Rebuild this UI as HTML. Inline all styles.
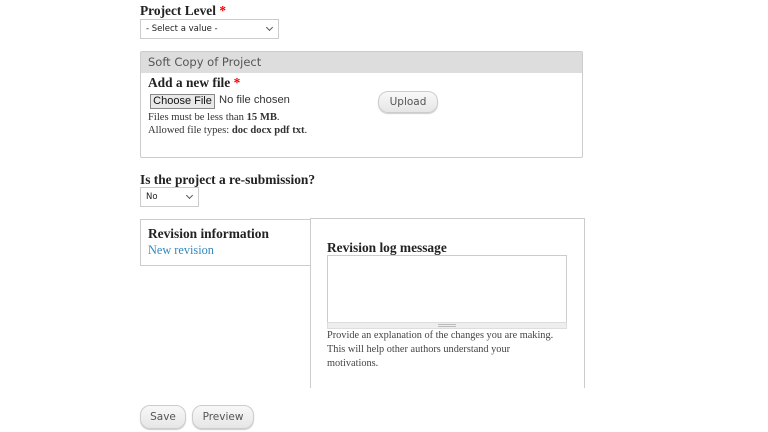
<!DOCTYPE html>
<html><head><style>
body{margin:0;width:768px;height:432px;background:#fff;position:relative;overflow:hidden;font-family:"Liberation Serif",serif;color:#333}
.a{position:absolute;white-space:nowrap}
.b{font-weight:bold;font-size:13.4px;color:#222}
.s{font-family:"Liberation Sans",sans-serif}
.req{color:#e00}
.sel{position:absolute;border:1px solid #ccc;background:#fff;font-family:"DejaVu Sans",sans-serif;font-size:8.5px;color:#222;box-sizing:border-box}
.chev{position:absolute;right:5px;top:4px;width:4px;height:4px;border-right:1px solid #555;border-bottom:1px solid #555;transform:rotate(45deg)}
.btn{position:absolute;border:1px solid #ccc;border-radius:10px;background:linear-gradient(#f8f8f8,#e6e6e6);font-family:"DejaVu Sans",sans-serif;font-size:10.5px;color:#555;text-align:center;box-sizing:border-box;box-shadow:0 1px 1px #ccc}
</style></head><body>
<div class="a b" style="left:140px;top:3px">Project Level <span class="req">*</span></div>
<div class="sel" style="left:140px;top:19px;width:139px;height:20px;padding:4px 0 0 5px">- Select a value -<div class="chev" style="top:5px;right:6px"></div></div>

<div class="a" style="left:140px;top:51px;width:443px;height:107px;border:1px solid #ccc;border-radius:2px;box-sizing:border-box"></div>
<div class="a" style="left:141px;top:52px;width:441px;height:21px;background:#ddd;font-family:'DejaVu Sans',sans-serif;font-size:11.5px;color:#555;padding:3px 0 0 7px;box-sizing:border-box">Soft Copy of Project</div>
<div class="a b" style="left:148px;top:75px">Add a new file <span class="req">*</span></div>
<div class="a s" style="left:150px;top:94px;width:65px;height:15px;border:1px solid #888;background:#e9e9e9;font-size:11px;color:#111;box-sizing:border-box;text-align:center;line-height:13px">Choose File</div>
<div class="a s" style="left:219px;top:94px;font-size:11.2px;color:#333">No file chosen</div>
<div class="btn" style="left:378px;top:91px;width:60px;height:22px;line-height:20px">Upload</div>
<div class="a" style="left:148px;top:112px;font-size:10.6px">Files must be less than <b>15 MB</b>.</div>
<div class="a" style="left:148px;top:125px;font-size:10.6px">Allowed file types: <b>doc docx pdf txt</b>.</div>

<div class="a b" style="left:140px;top:172px">Is the project a re-submission?</div>
<div class="sel" style="left:140px;top:187px;width:59px;height:20px;padding:4px 0 0 5px">No<div class="chev" style="top:5px;right:6px"></div></div>

<div class="a" style="left:140px;top:219px;width:171px;height:47px;border:1px solid #ccc;border-right:none;box-sizing:border-box"></div>
<div class="a" style="left:310px;top:218px;width:275px;height:170px;border:1px solid #ccc;border-bottom:none;box-sizing:border-box;background:#fff"></div>
<div class="a b" style="left:148px;top:226px">Revision information</div>
<div class="a" style="left:148px;top:243px;font-size:12.3px;color:#3389c0">New revision</div>
<div class="a b" style="left:327px;top:240px">Revision log message</div>
<div class="a" style="left:327px;top:255px;width:240px;height:68px;border:1px solid #ccc;box-sizing:border-box"></div>
<div class="a" style="left:327px;top:322px;width:240px;height:7px;background:#eee;border:1px solid #ddd;box-sizing:border-box"><div style="position:absolute;left:110px;top:1px;width:18px;height:3px;border-top:1px solid #bbb;border-bottom:1px solid #bbb;box-sizing:border-box"></div></div>
<div class="a" style="left:327px;top:329px;font-size:10.3px;line-height:14px;color:#444">Provide an explanation of the changes you are making.<br>This will help other authors understand your<br>motivations.</div>

<div class="btn" style="left:140px;top:405px;width:46px;height:24px;line-height:22px">Save</div>
<div class="btn" style="left:192px;top:405px;width:62px;height:24px;line-height:22px">Preview</div>
</body></html>
